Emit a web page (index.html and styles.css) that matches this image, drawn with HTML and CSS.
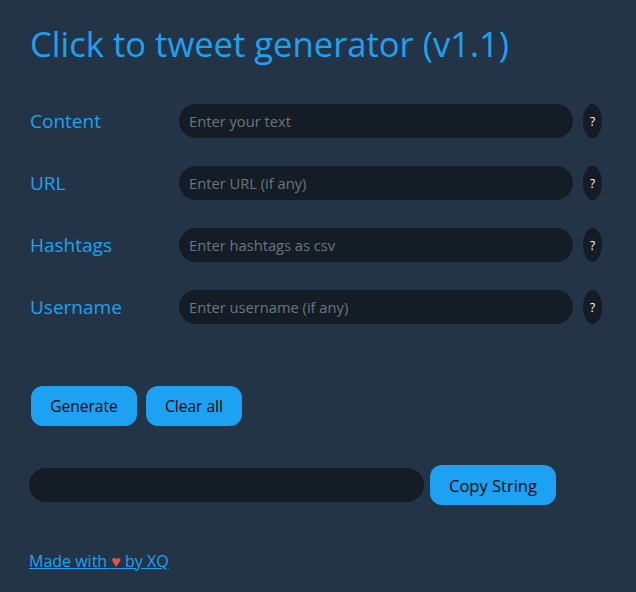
FILE: index.html
```html
<!DOCTYPE html>
<html lang="en">
<head>
<meta charset="utf-8">
<title>Click to tweet generator</title>
<link rel="stylesheet" href="styles.css">
</head>
<body>
<main class="app">
  <h1 class="title">Click to tweet generator (v1.1)</h1>
  <div class="fields">
    <div class="row">
      <label class="label">Content</label>
      <input class="field" type="text" placeholder="Enter your text">
      <button class="help">?</button>
    </div>
    <div class="row">
      <label class="label">URL</label>
      <input class="field" type="text" placeholder="Enter URL (if any)">
      <button class="help">?</button>
    </div>
    <div class="row">
      <label class="label">Hashtags</label>
      <input class="field" type="text" placeholder="Enter hashtags as csv">
      <button class="help">?</button>
    </div>
    <div class="row">
      <label class="label">Username</label>
      <input class="field" type="text" placeholder="Enter username (if any)">
      <button class="help">?</button>
    </div>
  </div>
  <div class="actions">
    <button class="btn btn-gen">Generate</button>
    <button class="btn btn-clear">Clear all</button>
  </div>
  <div class="output">
    <input class="field out-field" type="text">
    <button class="btn btn-copy">Copy String</button>
  </div>
  <footer class="footer">
    <a class="credit" href="#">Made with <span class="heart">♥</span> by XQ</a>
  </footer>
</main>
</body>
</html>
```

FILE: styles.css
```css
html, body {
  margin: 0;
  padding: 0;
  background: #243447;
}
body {
  font-family: "Open Sans", "Noto Sans", sans-serif;
  color: #1da1f2;
}
.app {
  padding: 22px 0 0 30px;
  width: 580px;
}
.title {
  margin: 0;
  font-size: 34.6px;
  font-weight: 400;
  line-height: 44px;
  color: #1da1f2;
}
.fields {
  margin-top: 38px;
  display: flex;
  flex-direction: column;
  gap: 28px;
}
.row {
  display: flex;
  align-items: center;
  height: 34px;
}
.label {
  width: 149px;
  font-size: 19px;
  font-weight: 500;
  color: #1da1f2;
}
.field {
  box-sizing: border-box;
  width: 394px;
  height: 34px;
  border: none;
  border-radius: 17px;
  background: #141d26;
  padding: 0 10px;
  font-family: inherit;
  font-size: 14.7px;
  color: #ccd;
  outline: none;
}
.field::placeholder {
  color: #6f7378;
}
.help {
  margin-left: 10px;
  width: 19px;
  height: 34px;
  border: none;
  border-radius: 50%;
  background: #141d26;
  color: #fff;
  font-family: inherit;
  font-size: 12px;
  padding: 0;
}
.actions {
  margin-top: 62px;
  display: flex;
  gap: 9px;
  padding-left: 1px;
}
.btn {
  height: 40px;
  border: none;
  border-radius: 12px;
  background: #1da1f2;
  color: #000;
  font-family: inherit;
  font-size: 15.5px;
  font-weight: 500;
  padding: 0;
}
.btn-gen { width: 106px; }
.btn-clear { width: 96px; }
.output {
  margin-top: 39px;
  margin-left: -1px;
  display: flex;
  align-items: center;
  gap: 6px;
}
.out-field {
  width: 395px;
}
.btn-copy {
  width: 126px;
  font-size: 16.5px;
}
.footer {
  margin-top: 45px;
  margin-left: -1px;
}
.credit {
  font-size: 16px;
  font-weight: 500;
  color: #1da1f2;
  text-decoration: underline;
}
.heart {
  color: #e25555;
}
```
